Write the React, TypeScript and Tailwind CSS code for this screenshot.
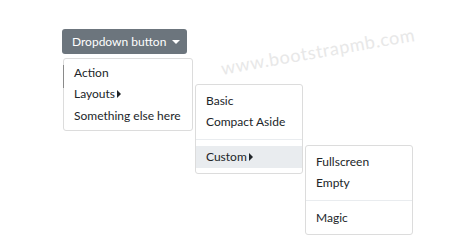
import React from "react";

const font = { fontFamily: '"Lato", "Noto Sans", sans-serif' };

function RightCaret() {
  return (
    <span className="ml-[2px] inline-block h-0 w-0 border-y-[4px] border-l-[4px] border-y-transparent border-l-[#212529]" />
  );
}

function Item({ children, active }: { children: React.ReactNode; active?: boolean }) {
  return (
    <div
      className={`flex h-[21.5px] items-center whitespace-nowrap px-[10px] text-[12px] text-[#212529] ${
        active ? "bg-[#e9ecef]" : ""
      }`}
    >
      {children}
    </div>
  );
}

function Divider() {
  return <div className="my-[6px] h-px bg-[#e9ecef]" />;
}

export default function App() {
  return (
    <div className="relative h-[241px] w-[474px] overflow-hidden bg-white" style={font}>
      <div
        className="pointer-events-none absolute left-[221px] top-[55px] origin-left -rotate-[10deg] select-none whitespace-nowrap text-[18px] tracking-[0.6px] text-[#e8e8e8]"
        style={{ fontFamily: '"Lato", sans-serif' }}
      >
        www.bootstrapmb.com
      </div>
      <div className="flex pl-[62px] pt-[29px]">
        <div className="relative">
          <div className="flex h-[25px] w-[125px] items-center whitespace-nowrap rounded-[3px] bg-[#6c757d] pl-[10px] text-[12px] text-white">
            Dropdown button
            <span className="ml-[6px] mt-[1px] inline-block h-0 w-0 border-x-[4px] border-t-[4px] border-x-transparent border-t-white" />
          </div>
          <div className="absolute left-[1px] top-[29px] w-[130px] rounded-[3px] border border-[#dcdcdc] bg-white py-[3px]">
            <div className="absolute left-[-1px] top-[6px] h-[23px] w-px bg-[#8a8a8a]" />
            <Item>Action</Item>
            <div className="relative">
              <Item>
                Layouts
                <RightCaret />
              </Item>
              <div className="absolute left-[131px] top-[0.5px] w-[108px] rounded-[3px] border border-[#dcdcdc] bg-white py-[5px]">
                <Item>Basic</Item>
                <Item>Compact Aside</Item>
                <Divider />
                <div className="relative">
                  <Item active>
                    Custom
                    <RightCaret />
                  </Item>
                  <div className="absolute left-[109px] top-[-1px] w-[108px] rounded-[3px] border border-[#dcdcdc] bg-white py-[5px]">
                    <Item>Fullscreen</Item>
                    <Item>Empty</Item>
                    <Divider />
                    <Item>Magic</Item>
                  </div>
                </div>
              </div>
            </div>
            <Item>Something else here</Item>
          </div>
        </div>
      </div>
    </div>
  );
}
